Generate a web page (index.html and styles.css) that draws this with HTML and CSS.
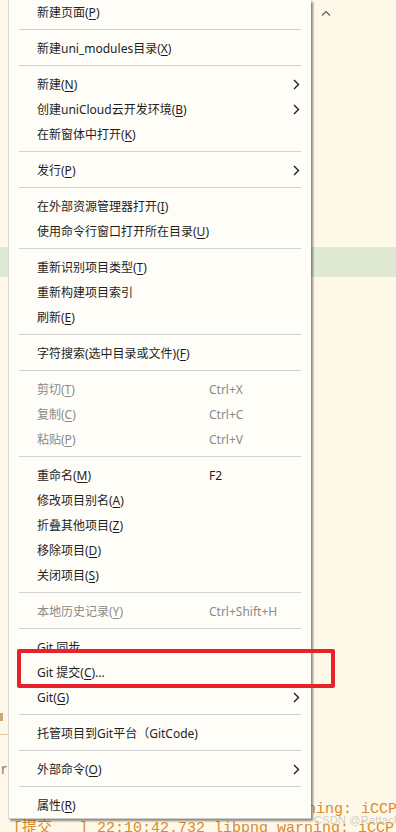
FILE: index.html
```html
<!DOCTYPE html>
<html lang="zh-CN">
<head>
<meta charset="utf-8">
<title>Menu</title>
<link rel="stylesheet" href="styles.css">
</head>
<body>
<div class="editor">
  <div class="caret-area">
    <svg class="caret" width="10" height="6" viewBox="0 0 10 6"><path d="M1 5.5 L5 1.5 L9 5.5" fill="none" stroke="#555" stroke-width="1.1"/></svg>
  </div>
  <div class="hl-line"></div>
  <div class="mid"></div>
  <div class="tan-mark"></div>
  <div class="tan-gap"></div>
  <div class="tan-rule"></div>
  <div class="tail-text">r</div>
  <div class="console">
    <div class="cline cline-right">warning: iCCP</div>
    <div class="cline">[提交   ] 22:10:42.732 libpng warning: iCCP</div>
  </div>
</div>

<div class="watermark">CSDN @Rattach</div>

<div class="menu">
  <div class="item"><span class="label">新建页面(<u>P</u>)</span></div>
  <div class="sep"></div>
  <div class="item"><span class="label">新建uni_modules目录(<u>X</u>)</span></div>
  <div class="sep"></div>
  <div class="item"><span class="label">新建(<u>N</u>)</span><span class="key"></span><svg class="arrow" width="7" height="11" viewBox="0 0 7 11"><path d="M1 1 L5.5 5.5 L1 10" fill="none" stroke="#1e1e1e" stroke-width="1.4"/></svg></div>
  <div class="item"><span class="label">创建uniCloud云开发环境(<u>B</u>)</span><span class="key"></span><svg class="arrow" width="7" height="11" viewBox="0 0 7 11"><path d="M1 1 L5.5 5.5 L1 10" fill="none" stroke="#1e1e1e" stroke-width="1.4"/></svg></div>
  <div class="item"><span class="label">在新窗体中打开(<u>K</u>)</span></div>
  <div class="sep"></div>
  <div class="item"><span class="label">发行(<u>P</u>)</span><span class="key"></span><svg class="arrow" width="7" height="11" viewBox="0 0 7 11"><path d="M1 1 L5.5 5.5 L1 10" fill="none" stroke="#1e1e1e" stroke-width="1.4"/></svg></div>
  <div class="sep"></div>
  <div class="item"><span class="label">在外部资源管理器打开(<u>I</u>)</span></div>
  <div class="item"><span class="label">使用命令行窗口打开所在目录(<u>U</u>)</span></div>
  <div class="sep"></div>
  <div class="item"><span class="label">重新识别项目类型(<u>T</u>)</span></div>
  <div class="item"><span class="label">重新构建项目索引</span></div>
  <div class="item"><span class="label">刷新(<u>E</u>)</span></div>
  <div class="sep"></div>
  <div class="item"><span class="label">字符搜索(选中目录或文件)(<u>F</u>)</span></div>
  <div class="sep"></div>
  <div class="item disabled"><span class="label">剪切(<u>T</u>)</span><span class="key">Ctrl+X</span></div>
  <div class="item disabled"><span class="label">复制(<u>C</u>)</span><span class="key">Ctrl+C</span></div>
  <div class="item disabled"><span class="label">粘贴(<u>P</u>)</span><span class="key">Ctrl+V</span></div>
  <div class="sep"></div>
  <div class="item"><span class="label">重命名(<u>M</u>)</span><span class="key">F2</span></div>
  <div class="item"><span class="label">修改项目别名(<u>A</u>)</span></div>
  <div class="item"><span class="label">折叠其他项目(<u>Z</u>)</span></div>
  <div class="item"><span class="label">移除项目(<u>D</u>)</span></div>
  <div class="item"><span class="label">关闭项目(<u>S</u>)</span></div>
  <div class="sep"></div>
  <div class="item disabled"><span class="label">本地历史记录(<u>Y</u>)</span><span class="key">Ctrl+Shift+H</span></div>
  <div class="sep"></div>
  <div class="item"><span class="label">Git 同步</span></div>
  <div class="item"><span class="label">Git 提交(<u>C</u>)...</span></div>
  <div class="item"><span class="label">Git(<u>G</u>)</span><span class="key"></span><svg class="arrow" width="7" height="11" viewBox="0 0 7 11"><path d="M1 1 L5.5 5.5 L1 10" fill="none" stroke="#1e1e1e" stroke-width="1.4"/></svg></div>
  <div class="sep"></div>
  <div class="item"><span class="label">托管项目到Git平台（GitCode)</span></div>
  <div class="sep"></div>
  <div class="item"><span class="label">外部命令(<u>O</u>)</span><span class="key"></span><svg class="arrow" width="7" height="11" viewBox="0 0 7 11"><path d="M1 1 L5.5 5.5 L1 10" fill="none" stroke="#1e1e1e" stroke-width="1.4"/></svg></div>
  <div class="sep"></div>
  <div class="item"><span class="label">属性(<u>R</u>)</span></div>
</div>

<div class="highlight-box"></div>
</body>
</html>
```
FILE: styles.css
```css
* { box-sizing: border-box; }
html, body {
  margin: 0;
  padding: 0;
  width: 396px;
  height: 832px;
  overflow: hidden;
  background: #fef8e8;
}
body {
  position: relative;
  font-family: "Noto Sans", "Noto Sans CJK SC", sans-serif;
}

/* editor behind */
.editor {
  display: flex;
  flex-direction: column;
  height: 832px;
  overflow: hidden;
}
.editor > * { flex: none; }
.caret-area {
  height: 247px;
  padding: 10px 0 0 321px;
}
.caret { display: block; }
.hl-line {
  height: 30px;
  background: #dfe9d3;
}
.mid { height: 436px; }
.tan-mark {
  width: 3px;
  height: 8px;
  background: #c8a878;
}
.tan-gap { height: 13px; }
.tan-rule {
  width: 8px;
  height: 1px;
  background: #e2cba0;
}
.tail-text {
  margin-top: 25px;
  height: 18px;
  line-height: 18px;
  padding-left: 1px;
  font-size: 14px;
  color: #7a7a7a;
}
.console {
  margin-top: 22px;
  padding-left: 13px;
  font-family: "Liberation Mono", "Noto Sans CJK SC", monospace;
  font-size: 15px;
  color: #db8a2e;
}
.cline {
  height: 19px;
  line-height: 19px;
  white-space: pre;
}
.cline-right {
  padding-left: 267px;
}

.watermark {
  position: absolute;
  right: -4px;
  top: 814px;
  font-family: "Liberation Sans", sans-serif;
  font-size: 11px;
  color: rgba(200, 200, 200, 0.9);
  letter-spacing: 0.2px;
}

/* context menu */
.menu {
  position: absolute;
  left: 8px;
  top: 0;
  width: 303px;
  background: #fffdf8;
  border-left: 1px solid #dcdad4;
  border-bottom: 1px solid #cfcdc8;
  box-shadow: 2px 2px 2px rgba(0, 0, 0, 0.45);
  font-size: 12px;
  color: #1e1e1e;
}
.item {
  display: flex;
  align-items: center;
  height: 25px;
  padding: 0 11px 1px 28px;
  white-space: nowrap;
}
.label {
  width: 172px;
  flex: none;
}
.key {
  flex: 1;
}
.arrow {
  flex: none;
  display: block;
}
.item u {
  text-decoration-thickness: 1px;
  text-underline-offset: 2px;
}
.item.disabled {
  color: #8a8a8a;
}
.sep {
  height: 1px;
  margin: 4px 10px 6px 10px;
  background: #d2d2d2;
}

.highlight-box {
  position: absolute;
  left: 17px;
  top: 649px;
  width: 318px;
  height: 39px;
  border: 4px solid #e8222b;
  border-radius: 2px;
}
```
